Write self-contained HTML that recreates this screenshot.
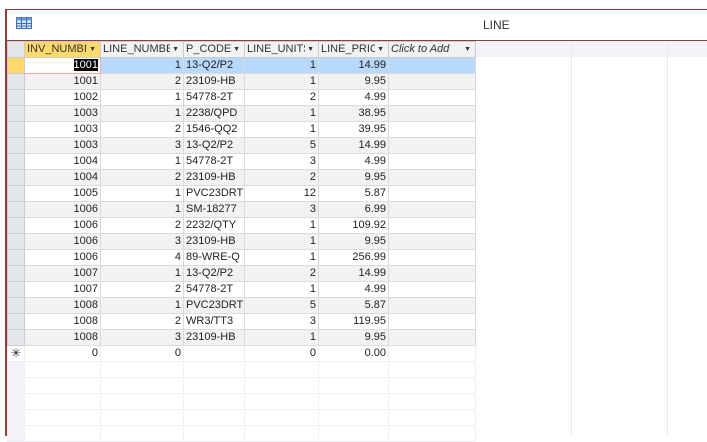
<!DOCTYPE html><html><head><style>
body{margin:0;width:707px;height:436px;background:#fff;position:relative;overflow:hidden;font-family:"Liberation Sans",sans-serif;font-size:11px;color:#222}
.top{position:absolute;left:5px;top:9px;width:702px;height:32px;border-top:1px solid #9b3a3a;border-left:2px solid #9b3a3a;border-bottom:1px solid #9b3a3a;box-sizing:border-box;background:#fff}
.lb{position:absolute;left:5px;top:41px;width:2px;height:395px;background:#9b3a3a}
.title{position:absolute;left:483px;top:18px;font-size:12px;color:#333}
table{position:absolute;left:7px;top:41px;border-collapse:collapse;table-layout:fixed;width:468px}
td{height:15px;padding:0 2px;border:1px solid #d8dbe0;white-space:nowrap;overflow:hidden;line-height:15px;position:relative}
td.r{text-align:right}
tr.h td{background:#e3e6ea;color:#333;border-color:#c8ccd2;padding-right:14px;text-overflow:clip}
tr.h td.s1{background:#ffd96b}
tr:nth-child(odd) td{background:#f2f2f2}
tr:nth-child(even) td{background:#fff}
td.sel{background:#e3e6ea!important;border-color:#c8ccd2}
tr.a td{background:#b8d9fb!important}
tr.a td.sel{background:#ffd96b!important}
tr.e td{background:#fff!important;border-color:#eef0f3}
tr.e td.sel{background:#f3f4f8!important}
.dd{position:absolute;right:4px;top:0;font-size:7px;background:inherit;padding-left:2px}
.grid{position:absolute;top:42px;left:475px;width:232px;height:15px;background:#f3f4fa}
.vl{position:absolute;top:42px;width:1px;height:395px;background:#e8eaee}
</style></head><body>
<div class="top"></div><div class="lb"></div>
<svg style="position:absolute;left:16px;top:17px" width="16" height="12"><rect x="0.5" y="0.5" width="15" height="11" fill="#dbe6f5" stroke="#3d6fb5"/><rect x="0.5" y="0.5" width="15" height="3" fill="#6f95cf"/><path d="M0 6.5H16M0 9H16M5.5 0V12M10.5 0V12" stroke="#3d6fb5"/></svg>
<div class="title">LINE</div>
<div class="grid"></div>
<div class="vl" style="left:571px"></div><div class="vl" style="left:667px"></div>
<table>
<colgroup><col style="width:17px"><col style="width:76px"><col style="width:83px"><col style="width:61px"><col style="width:74px"><col style="width:70px"><col style="width:87px"></colgroup>
<tr class="h"><td class="sel"></td><td class="s1">INV_NUMBI<span class="dd">▼</span></td><td>LINE_NUMBE<span class="dd">▼</span></td><td>P_CODE<span class="dd">▼</span></td><td>LINE_UNITS<span class="dd">▼</span></td><td>LINE_PRIC<span class="dd">▼</span></td><td><i>Click to Add</i><span class="dd">▼</span></td></tr>
<tr class="a"><td class="sel"></td><td class="r" style="background:#fff!important;border:1px solid #f4a8a8"><span style="background:#000;color:#fff">1001</span></td><td class="r">1</td><td>13-Q2/P2</td><td class="r">1</td><td class="r">14.99</td><td></td></tr>
<tr><td class="sel"></td><td class="r">1001</td><td class="r">2</td><td>23109-HB</td><td class="r">1</td><td class="r">9.95</td><td></td></tr>
<tr><td class="sel"></td><td class="r">1002</td><td class="r">1</td><td>54778-2T</td><td class="r">2</td><td class="r">4.99</td><td></td></tr>
<tr><td class="sel"></td><td class="r">1003</td><td class="r">1</td><td>2238/QPD</td><td class="r">1</td><td class="r">38.95</td><td></td></tr>
<tr><td class="sel"></td><td class="r">1003</td><td class="r">2</td><td>1546-QQ2</td><td class="r">1</td><td class="r">39.95</td><td></td></tr>
<tr><td class="sel"></td><td class="r">1003</td><td class="r">3</td><td>13-Q2/P2</td><td class="r">5</td><td class="r">14.99</td><td></td></tr>
<tr><td class="sel"></td><td class="r">1004</td><td class="r">1</td><td>54778-2T</td><td class="r">3</td><td class="r">4.99</td><td></td></tr>
<tr><td class="sel"></td><td class="r">1004</td><td class="r">2</td><td>23109-HB</td><td class="r">2</td><td class="r">9.95</td><td></td></tr>
<tr><td class="sel"></td><td class="r">1005</td><td class="r">1</td><td>PVC23DRT</td><td class="r">12</td><td class="r">5.87</td><td></td></tr>
<tr><td class="sel"></td><td class="r">1006</td><td class="r">1</td><td>SM-18277</td><td class="r">3</td><td class="r">6.99</td><td></td></tr>
<tr><td class="sel"></td><td class="r">1006</td><td class="r">2</td><td>2232/QTY</td><td class="r">1</td><td class="r">109.92</td><td></td></tr>
<tr><td class="sel"></td><td class="r">1006</td><td class="r">3</td><td>23109-HB</td><td class="r">1</td><td class="r">9.95</td><td></td></tr>
<tr><td class="sel"></td><td class="r">1006</td><td class="r">4</td><td>89-WRE-Q</td><td class="r">1</td><td class="r">256.99</td><td></td></tr>
<tr><td class="sel"></td><td class="r">1007</td><td class="r">1</td><td>13-Q2/P2</td><td class="r">2</td><td class="r">14.99</td><td></td></tr>
<tr><td class="sel"></td><td class="r">1007</td><td class="r">2</td><td>54778-2T</td><td class="r">1</td><td class="r">4.99</td><td></td></tr>
<tr><td class="sel"></td><td class="r">1008</td><td class="r">1</td><td>PVC23DRT</td><td class="r">5</td><td class="r">5.87</td><td></td></tr>
<tr><td class="sel"></td><td class="r">1008</td><td class="r">2</td><td>WR3/TT3</td><td class="r">3</td><td class="r">119.95</td><td></td></tr>
<tr><td class="sel"></td><td class="r">1008</td><td class="r">3</td><td>23109-HB</td><td class="r">1</td><td class="r">9.95</td><td></td></tr>
<tr class="e"><td class="sel" style="background:#fff!important;text-align:center;font-size:12px">✳</td><td class="r">0</td><td class="r">0</td><td></td><td class="r">0</td><td class="r">0.00</td><td></td></tr>
<tr class="e"><td class="sel"></td><td></td><td></td><td></td><td></td><td></td><td></td></tr>
<tr class="e"><td class="sel"></td><td></td><td></td><td></td><td></td><td></td><td></td></tr>
<tr class="e"><td class="sel"></td><td></td><td></td><td></td><td></td><td></td><td></td></tr>
<tr class="e"><td class="sel"></td><td></td><td></td><td></td><td></td><td></td><td></td></tr>
<tr class="e"><td class="sel"></td><td></td><td></td><td></td><td></td><td></td><td></td></tr>
</table>
</body></html>
